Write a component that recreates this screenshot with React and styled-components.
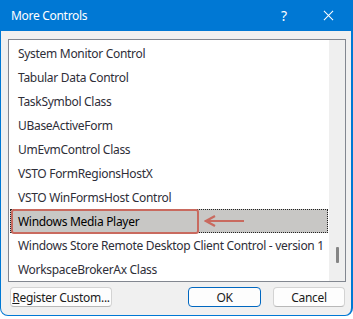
import React from 'react'
import styled, { createGlobalStyle } from 'styled-components'

const GlobalStyle = createGlobalStyle`
  html, body {
    margin: 0;
    padding: 0;
    background: #ffffff;
  }
  body {
    font-family: "Noto Sans", "Open Sans", "Liberation Sans", sans-serif;
  }
`

const items = [
  'System Monitor Control',
  'Tabular Data Control',
  'TaskSymbol Class',
  'UBaseActiveForm',
  'UmEvmControl Class',
  'VSTO FormRegionsHostX',
  'VSTO WinFormsHost Control',
  'Windows Media Player',
  'Windows Store Remote Desktop Client Control - version 1',
  'WorkspaceBrokerAx Class',
]

const App = () => {
  return (
    <>
      <GlobalStyle />
      <Window>
        <TitleBar>
          <Title>More Controls</Title>
          <TitleButtons>
            <HelpGlyph>?</HelpGlyph>
            <CloseIcon viewBox="0 0 12 12">
              <path d="M1 1 L11 11 M11 1 L1 11" stroke="#fff" strokeWidth="1.1" fill="none" />
            </CloseIcon>
          </TitleButtons>
        </TitleBar>
        <Body>
          <ListBox>
            <ListItems>
              {items.map((name) => (
                <Item key={name} selected={name === 'Windows Media Player'}>
                  {name}
                  {name === 'Windows Media Player' && (
                    <>
                      <Callout />
                      <Arrow viewBox="0 0 40 12">
                        <path d="M40 6 H4" stroke="#c96a5f" strokeWidth="2.2" />
                        <path d="M11 1 L2 6 L11 11" stroke="#c96a5f" strokeWidth="2.2" fill="none" />
                      </Arrow>
                    </>
                  )}
                </Item>
              ))}
            </ListItems>
            <ScrollTrack>
              <Thumb />
            </ScrollTrack>
          </ListBox>
          <ButtonRow>
            <Button width={102}>
              <span>
                <u>R</u>egister Custom...
              </span>
            </Button>
            <Spacer />
            <Button width={73} primary>OK</Button>
            <Button width={72}>Cancel</Button>
          </ButtonRow>
        </Body>
      </Window>
    </>
  )
}

export default App

const Window = styled.div`
  width: 353px;
  height: 316px;
  box-sizing: border-box;
  background: #f0f0f0;
  border-left: 1px solid #0078d4;
  border-right: 2px solid #0078d4;
  border-bottom: 1px solid #0078d4;
  border-radius: 0 0 8px 8px;
  display: flex;
  flex-direction: column;
  overflow: hidden;
`

const TitleBar = styled.div`
  height: 31px;
  flex-shrink: 0;
  background: #0078d4;
  color: #ffffff;
  display: flex;
  align-items: center;
  padding-left: 10px;
`

const Title = styled.div`
  font-size: 12px;
  letter-spacing: -0.3px;
  flex: 1;
`

const TitleButtons = styled.div`
  display: flex;
  align-items: center;
`

const HelpGlyph = styled.span`
  font-size: 14px;
  width: 8px;
  margin-right: 34px;
`

const CloseIcon = styled.svg`
  width: 11px;
  height: 11px;
  margin-right: 17px;
`

const Body = styled.div`
  flex: 1;
  display: flex;
  flex-direction: column;
  padding: 8px 5px 8px 7px;
`

const ListBox = styled.div`
  height: 243px;
  box-sizing: border-box;
  border: 1px solid #828790;
  background: #ffffff;
  display: flex;
`

const ListItems = styled.div`
  flex: 1;
  min-width: 0;
  padding: 1px 1px 0 1px;
  overflow: hidden;
  display: flex;
  flex-direction: column;
`

const Item = styled.div`
  position: relative;
  height: 24px;
  flex-shrink: 0;
  box-sizing: border-box;
  display: flex;
  align-items: center;
  padding-left: 7px;
  font-size: 12px;
  letter-spacing: -0.3px;
  white-space: nowrap;
  color: ${(p) => (p.selected ? '#000000' : '#2e2e38')};
  background: ${(p) => (p.selected ? '#c8c7c5' : 'transparent')};
  border: 1px ${(p) => (p.selected ? 'dotted #222' : 'solid transparent')};
`

const Callout = styled.div`
  position: absolute;
  left: 0;
  top: -1px;
  width: 188px;
  height: 25px;
  box-sizing: border-box;
  border: 2px solid #c96a5f;
  border-radius: 3px;
`

const Arrow = styled.svg`
  position: absolute;
  left: 193px;
  top: 5px;
  width: 40px;
  height: 12px;
`

const ScrollTrack = styled.div`
  width: 16px;
  flex-shrink: 0;
  background: #efefef;
  padding-top: 207px;
  box-sizing: border-box;
  display: flex;
  justify-content: center;
`

const Thumb = styled.div`
  width: 3px;
  height: 16px;
  border-radius: 1px;
  background: #858585;
`

const ButtonRow = styled.div`
  display: flex;
  align-items: center;
  gap: 12px;
  margin-top: 5px;
  padding: 0 1px 0 2px;
`

const Spacer = styled.div`
  flex: 1;
`

const Button = styled.div`
  width: ${(p) => p.width}px;
  height: 20px;
  flex-shrink: 0;
  box-sizing: border-box;
  display: flex;
  align-items: center;
  justify-content: center;
  font-size: 12px;
  letter-spacing: -0.3px;
  white-space: nowrap;
  color: #1b1b1b;
  background: #fdfdfd;
  border: 1px solid ${(p) => (p.primary ? '#0067c0' : '#d3d3d3')};
  border-bottom-color: ${(p) => (p.primary ? '#0067c0' : '#b8b8b8')};
  border-radius: 4px;
`
